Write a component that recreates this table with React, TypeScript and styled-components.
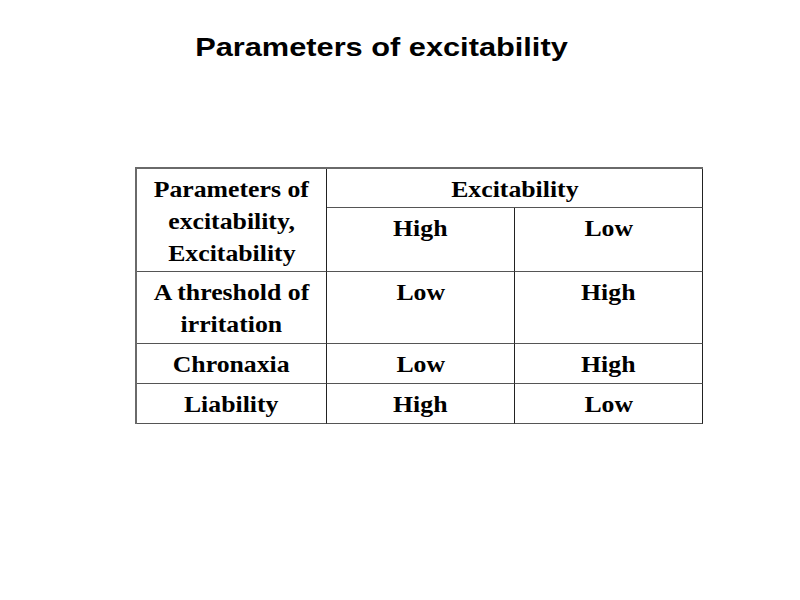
import React from "react";
import styled, { createGlobalStyle } from "styled-components";

const Global = createGlobalStyle`
  html, body { margin: 0; padding: 0; background: #fff; }
  #root { width: 800px; height: 600px; }
`;

const Page = styled.div`
  width: 800px;
  height: 600px;
  background: #fff;
  display: flex;
  flex-direction: column;
  box-sizing: border-box;
  padding-top: 33px;
`;

const TitleRow = styled.div`
  display: flex;
  justify-content: center;
  padding-right: 37px;
  height: 28px;
`;

const Title = styled.h1`
  margin: 0;
  font-family: "Liberation Sans", Arial, sans-serif;
  font-weight: bold;
  font-size: 25px;
  line-height: 28px;
  color: #000;
  display: inline-block;
  transform: scaleX(1.23);
  transform-origin: center;
  white-space: nowrap;
`;

const Grid = styled.div`
  margin-top: 106px;
  margin-left: 135px;
  display: grid;
  grid-template-columns: 190px 188px 188px;
  grid-template-rows: 39px 64px 72px 40px 40px;
  width: max-content;
  border-top: 2px solid #6a6a6a;
  border-left: 2px solid #6a6a6a;
`;

const Cell = styled.div<{ $col: string; $row: string }>`
  grid-column: ${(p) => p.$col};
  grid-row: ${(p) => p.$row};
  box-sizing: border-box;
  border-right: 1.5px solid #222;
  border-bottom: 1.5px solid #555;
  padding-top: 5px;
  text-align: center;
  font-family: "Liberation Serif", "Times New Roman", serif;
  font-weight: bold;
  font-size: 23px;
  line-height: 32px;
  color: #000;
`;

const Text = styled.span`
  display: inline-block;
  transform: scaleX(1.12);
  transform-origin: center;
  white-space: nowrap;
`;

const rows: [string, string, string][] = [
  ["Chronaxia", "Low", "High"],
  ["Liability", "High", "Low"],
];

export default function App() {
  return (
    <>
      <Global />
      <Page>
        <TitleRow>
          <Title>Parameters of excitability</Title>
        </TitleRow>
        <Grid>
          <Cell $col="1" $row="1 / span 2">
            <Text>Parameters of</Text>
            <br />
            <Text>excitability,</Text>
            <br />
            <Text>Excitability</Text>
          </Cell>
          <Cell $col="2 / span 2" $row="1">
            <Text>Excitability</Text>
          </Cell>
          <Cell $col="2" $row="2">
            <Text>High</Text>
          </Cell>
          <Cell $col="3" $row="2">
            <Text>Low</Text>
          </Cell>
          <Cell $col="1" $row="3">
            <Text>A threshold of</Text>
            <br />
            <Text>irritation</Text>
          </Cell>
          <Cell $col="2" $row="3">
            <Text>Low</Text>
          </Cell>
          <Cell $col="3" $row="3">
            <Text>High</Text>
          </Cell>
          {rows.map((r, i) => (
            <React.Fragment key={r[0]}>
              <Cell $col="1" $row={String(4 + i)}>
                <Text>{r[0]}</Text>
              </Cell>
              <Cell $col="2" $row={String(4 + i)}>
                <Text>{r[1]}</Text>
              </Cell>
              <Cell $col="3" $row={String(4 + i)}>
                <Text>{r[2]}</Text>
              </Cell>
            </React.Fragment>
          ))}
        </Grid>
      </Page>
    </>
  );
}
